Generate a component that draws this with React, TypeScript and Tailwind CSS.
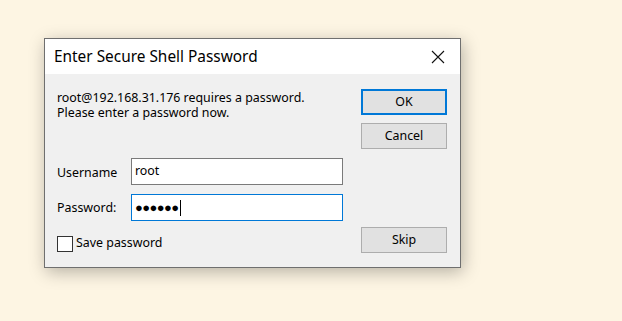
import React from 'react';

const font = { fontFamily: '"Noto Sans", "Open Sans", "Liberation Sans", sans-serif' };

export default function App() {
  const [user, setUser] = React.useState('root');
  const [save, setSave] = React.useState(false);

  return (
    <div className="w-[622px] h-[321px] bg-[#fdf5e3] pl-[44px] pt-[38px]" style={font}>
      <div className="w-[417px] h-[230px] border border-[#6f6f6f] bg-[#f0f0f0] flex flex-col shadow-[2px_4px_16px_rgba(0,0,0,0.28)]">
        {/* title bar */}
        <div className="h-[37px] bg-white flex items-center justify-between pl-[9px] pr-[15px]">
          <span className="text-[15.4px] text-black leading-none">Enter Secure Shell Password</span>
          <svg width="14" height="14" viewBox="0 0 14 14" className="mt-[1px]">
            <path d="M1 1 L13 13 M13 1 L1 13" stroke="#111" strokeWidth="1.1" fill="none" />
          </svg>
        </div>

        {/* body */}
        <div className="flex-1 flex pl-[12px] pr-[13px] pt-[15px] pb-[14px]">
          <div className="w-[286px] flex flex-col">
            <div className="mt-[1px] text-[12.4px] leading-[15px] text-black">
              <div>root@192.168.31.176 requires a password.</div>
              <div>Please enter a password now.</div>
            </div>

            <div className="mt-[38px] flex items-center">
              <span className="w-[74px] pt-[2px] text-[12.4px] text-black">Username</span>
              <input
                value={user}
                onChange={(e) => setUser(e.target.value)}
                className="w-[212px] h-[27px] border border-[#7a7a7a] bg-white px-[3px] pb-[2px] text-[12.4px] text-black outline-none"
                style={font}
              />
            </div>

            <div className="mt-[9px] flex items-center">
              <span className="w-[74px] text-[12.4px] text-black">Password:</span>
              <div className="w-[212px] h-[27px] border border-[#0078d7] bg-white pl-[3px] flex items-center">
                <span className="text-[13px] tracking-[-0.6px] text-black leading-none">●●●●●●</span>
                <span className="ml-[1px] w-[1px] h-[16px] bg-black" />
              </div>
            </div>

            <label className="mt-[13px] flex items-center cursor-default">
              <span
                onClick={() => setSave(!save)}
                className="w-[16px] h-[16px] border border-[#333] bg-white flex items-center justify-center text-[11px]"
              >
                {save ? '✓' : ''}
              </span>
              <span className="ml-[3px] text-[12.4px] text-black">Save password</span>
            </label>
          </div>

          <div className="ml-[18px] w-[86px] flex flex-col">
            <button className="h-[26px] border-2 border-[#0078d7] bg-[#e1e1e1] text-[12.4px] text-black">OK</button>
            <button className="mt-[8px] h-[26px] border border-[#adadad] bg-[#e1e1e1] text-[12.4px] text-black">Cancel</button>
            <div className="flex-1" />
            <button className="h-[26px] border border-[#adadad] bg-[#e1e1e1] text-[12.4px] text-black">Skip</button>
          </div>
        </div>
      </div>
    </div>
  );
}
